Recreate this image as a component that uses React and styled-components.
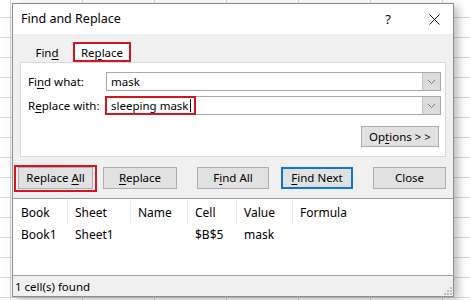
import React from "react";
import styled, { createGlobalStyle } from "styled-components";

const GlobalStyle = createGlobalStyle`
  html, body {
    margin: 0;
    padding: 0;
    width: 470px;
    height: 300px;
    overflow: hidden;
  }
  body {
    font-family: "Noto Sans", "Liberation Sans", sans-serif;
    color: #000;
    background-color: #fff;
    background-image:
      linear-gradient(to bottom, #d6d6d6 1px, transparent 1px),
      linear-gradient(to right, #d6d6d6 1px, transparent 1px);
    background-size: 100% 20px, 72px 100%;
    background-position: 0 17px, 10px 0;
  }
`;

const Dialog = styled.div`
  box-sizing: border-box;
  width: 442px;
  height: 294px;
  margin: 3px 0 0 12px;
  border: 1px solid #8f8f8f;
  background: #f0f0f0;
  box-shadow: 4px 3px 9px rgba(0, 0, 0, 0.28);
  display: flex;
  flex-direction: column;
  font-size: 11.5px;
`;

const TitleBar = styled.div`
  height: 30px;
  flex: none;
  background: #fff;
  display: flex;
  align-items: center;
  padding-left: 8px;
`;

const Title = styled.div`
  flex: 1;
  font-size: 12.5px;
  padding-bottom: 1px;
`;

const TitleButton = styled.div`
  width: ${(p) => p.$w}px;
  height: 30px;
  display: flex;
  align-items: center;
  justify-content: center;
  font-size: 13px;
`;

const TabStrip = styled.div`
  flex: none;
  height: 20px;
  padding: 8px 0 0 9px;
  display: flex;
`;

const Tab = styled.div`
  box-sizing: border-box;
  width: ${(p) => p.$w}px;
  height: 20px;
  display: flex;
  align-items: center;
  justify-content: center;
  background: ${(p) => (p.$active ? "#fff" : "transparent")};
  border: 2px solid ${(p) => (p.$active ? "#d0161e" : "transparent")};
  margin-left: ${(p) => p.$ml || 0}px;
`;

const Panel = styled.div`
  box-sizing: border-box;
  flex: none;
  height: 95px;
  margin: 0 7px;
  background: #fff;
  border: 1px solid #d9d9d9;
  padding: 9px 4px 0 7px;
  display: flex;
  flex-direction: column;
  gap: 5px;
`;

const FieldRow = styled.div`
  display: grid;
  grid-template-columns: 78px 1fr;
  align-items: center;
  height: 19px;
`;

const Combo = styled.div`
  position: relative;
  box-sizing: border-box;
  height: 19px;
  border: 1px solid #a9a9a9;
  background: #fff;
  display: flex;
  align-items: center;
`;

const ComboText = styled.div`
  flex: 1;
  padding-left: 4px;
  display: flex;
  align-items: center;
  white-space: pre;
`;

const Caret = styled.span`
  display: inline-block;
  width: 1px;
  height: 13px;
  background: #000;
  margin-left: 1px;
`;

const DropButton = styled.div`
  box-sizing: border-box;
  width: 18px;
  height: 17px;
  background: #dcdcdc;
  border-left: 1px solid #c4c4c4;
  display: flex;
  align-items: center;
  justify-content: center;
`;

const Marker = styled.div`
  position: absolute;
  left: -2px;
  top: -1px;
  width: 91px;
  height: 19px;
  box-sizing: border-box;
  border: 2px solid #d0161e;
`;

const OptionsRow = styled.div`
  display: flex;
  justify-content: flex-end;
  margin-top: 6px;
  padding-right: 2px;
`;

const Button = styled.div`
  box-sizing: border-box;
  width: ${(p) => p.$w}px;
  height: ${(p) => p.$h || 22}px;
  margin-left: ${(p) => p.$ml || 0}px;
  background: #e1e1e1;
  border: ${(p) => (p.$default ? "2px solid #0a78d4" : "1px solid #adadad")};
  display: flex;
  align-items: center;
  justify-content: center;
  flex: none;
  white-space: pre;
`;

const ButtonRow = styled.div`
  flex: none;
  height: 41px;
  display: flex;
  align-items: center;
  padding-left: 1px;
`;

const Highlight = styled.div`
  border: 2px solid #d0161e;
  padding: 0 2px 1px 2px;
  margin-top: 1px;
  display: flex;
`;

const Results = styled.div`
  flex: 1;
  background: #fff;
  border-top: 1px solid #9c9c9c;
  padding-top: 1px;
`;

const ResultRow = styled.div`
  display: grid;
  grid-template-columns: 55px 63px 57px 49px 56px 1fr;
  height: ${(p) => p.$h}px;
`;

const Cell = styled.div`
  display: flex;
  align-items: center;
  padding-left: ${(p) => (p.$first ? 8 : 7)}px;
  font-size: 12px;
  border-right: ${(p) => (p.$sep ? "1px solid #ececec" : "none")};
  white-space: nowrap;
`;

const StatusBar = styled.div`
  flex: none;
  height: 20px;
  border-top: 1px solid #a0a0a0;
  display: flex;
  align-items: center;
  padding-left: 2px;
  position: relative;
  font-size: 11.5px;
`;

const Grip = styled.svg`
  position: absolute;
  right: 1px;
  bottom: 1px;
`;

const Key = styled.span`
  text-decoration: underline;
  text-underline-offset: 2px;
`;

function Chevron() {
  return (
    <svg width="9" height="6" viewBox="0 0 9 6">
      <polyline points="1,1 4.5,4.5 8,1" fill="none" stroke="#7a7a7a" strokeWidth="1" />
    </svg>
  );
}

const headers = ["Book", "Sheet", "Name", "Cell", "Value", "Formula"];
const row = ["Book1", "Sheet1", "", "$B$5", "mask", ""];

export default function App() {
  return (
    <>
      <GlobalStyle />
      <Dialog>
        <TitleBar>
          <Title>Find and Replace</Title>
          <TitleButton $w={54}>?</TitleButton>
          <TitleButton $w={38}>
            <svg width="11" height="11" viewBox="0 0 11 11">
              <path d="M0.5 0.5 L10.5 10.5 M10.5 0.5 L0.5 10.5" stroke="#111" strokeWidth="1" />
            </svg>
          </TitleButton>
        </TitleBar>

        <TabStrip>
          <Tab $w={50}><span>Fin<Key>d</Key></span></Tab>
          <Tab $w={58} $ml={1} $active><span>Re<Key>p</Key>lace</span></Tab>
        </TabStrip>

        <Panel>
          <FieldRow>
            <span>Fi<Key>n</Key>d what:</span>
            <Combo>
              <ComboText>mask</ComboText>
              <DropButton><Chevron /></DropButton>
            </Combo>
          </FieldRow>
          <FieldRow>
            <span>R<Key>e</Key>place with:</span>
            <Combo>
              <ComboText><span>sleeping mask</span><Caret /></ComboText>
              <DropButton><Chevron /></DropButton>
              <Marker />
            </Combo>
          </FieldRow>
          <OptionsRow>
            <Button $w={78} $h={21}><span>Op<Key>t</Key>ions &gt; &gt;</span></Button>
          </OptionsRow>
        </Panel>

        <ButtonRow>
          <Highlight>
            <Button $w={75}><span>Replace <Key>A</Key>ll</span></Button>
          </Highlight>
          <Button $w={74} $ml={6}><span><Key>R</Key>eplace</span></Button>
          <Button $w={72} $ml={20}><span>F<Key>i</Key>nd All</span></Button>
          <Button $w={72} $ml={12} $default><span><Key>F</Key>ind Next</span></Button>
          <Button $w={73} $ml={20}>Close</Button>
        </ButtonRow>

        <Results>
          <ResultRow $h={24}>
            {headers.map((h, i) => (
              <Cell key={h} $first={i === 0} $sep={i < 5}>{h}</Cell>
            ))}
          </ResultRow>
          <ResultRow $h={20}>
            {row.map((v, i) => (
              <Cell key={i} $first={i === 0}>{v}</Cell>
            ))}
          </ResultRow>
        </Results>

        <StatusBar>
          1 cell(s) found
          <Grip width="10" height="10" viewBox="0 0 10 10">
            <rect x="8" y="2" width="2" height="2" fill="#bdbdbd" />
            <rect x="5" y="5" width="2" height="2" fill="#bdbdbd" />
            <rect x="8" y="5" width="2" height="2" fill="#bdbdbd" />
            <rect x="2" y="8" width="2" height="2" fill="#bdbdbd" />
            <rect x="5" y="8" width="2" height="2" fill="#bdbdbd" />
            <rect x="8" y="8" width="2" height="2" fill="#bdbdbd" />
          </Grip>
        </StatusBar>
      </Dialog>
    </>
  );
}
